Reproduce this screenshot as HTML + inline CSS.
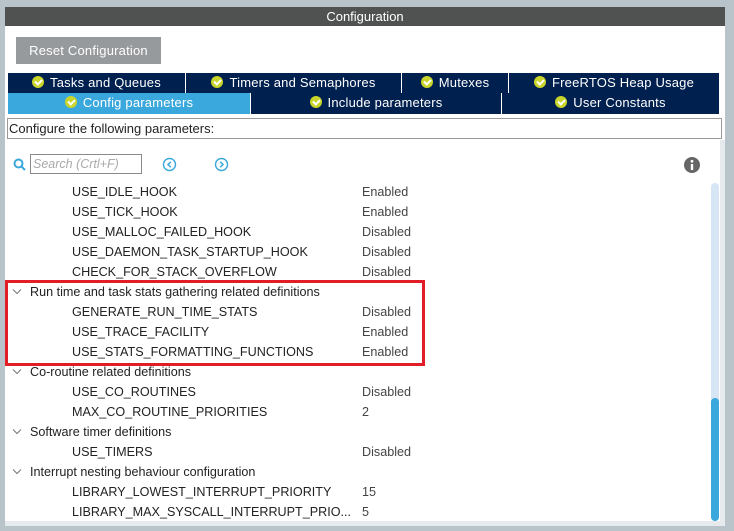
<!DOCTYPE html>
<html><head><style>
*{margin:0;padding:0;box-sizing:border-box}
body{width:734px;height:531px;background:#b9c4ca;font-family:"Liberation Sans",Arial,sans-serif;position:relative;overflow:hidden}
.panel{position:absolute;left:5px;top:7px;width:720px;height:519px;background:#fff}
.hdr{position:absolute;left:5px;top:7px;width:720px;height:19px;background:#505251;color:#fff;font-size:13px;text-align:center;line-height:19px}
.btn{position:absolute;left:16px;top:37px;width:145px;height:27px;background:#979a9d;color:#fff;font-size:13px;line-height:27px;text-align:center;letter-spacing:.2px}
.tab{position:absolute;height:20px;background:#00204f;color:#fff;font-size:13px;line-height:20px;text-align:center;letter-spacing:.2px}
.tab.a{background:#3aa8dc}
.ck{display:inline-block;width:12px;height:12px;border-radius:50%;background:#c9d52b;vertical-align:-1px;margin-right:6px;position:relative}
.ck:after{content:"";position:absolute;left:3px;top:2.5px;width:5px;height:3px;border-left:2px solid #fff;border-bottom:2px solid #fff;transform:rotate(-45deg)}
.desc{position:absolute;left:7px;top:118px;width:715px;height:21px;border:1px solid #9a9a9a;font-size:13px;line-height:19px;padding-left:1px;color:#222}
.srch{position:absolute;left:30px;top:154px;width:112px;height:20px;border:1px solid #8a8a8a;font-size:12.5px;font-style:italic;color:#aaa;line-height:18px;padding-left:2px}
.row{position:absolute;left:0;font-size:12.6px;color:#222;height:20px;line-height:20px;white-space:nowrap}
.n{position:absolute;left:72px}
.v{position:absolute;left:362px;color:#444}
.g{position:absolute;left:30px}
.chev{position:absolute;left:12px;top:6px}
</style></head><body>
<div class="panel"></div>
<div class="hdr">Configuration</div>
<div class="btn">Reset Configuration</div>
<div class="tab" style="left:8px;top:73px;width:177px"><span class="ck"></span>Tasks and Queues</div>
<div class="tab" style="left:186px;top:73px;width:215px"><span class="ck"></span>Timers and Semaphores</div>
<div class="tab" style="left:402px;top:73px;width:106px"><span class="ck"></span>Mutexes</div>
<div class="tab" style="left:509px;top:73px;width:210px"><span class="ck"></span>FreeRTOS Heap Usage</div>
<div class="tab a" style="left:8px;top:93px;width:242px;height:21px"><span class="ck"></span>Config parameters</div>
<div class="tab" style="left:251px;top:93px;width:250px;height:21px"><span class="ck"></span>Include parameters</div>
<div class="tab" style="left:502px;top:93px;width:217px;height:21px"><span class="ck"></span>User Constants</div>
<div class="desc">Configure the following parameters:</div>
<svg style="position:absolute;left:13px;top:158px" width="13" height="13"><circle cx="5.5" cy="5.5" r="4" fill="none" stroke="#3aa8dc" stroke-width="2"/><line x1="8.5" y1="8.5" x2="12" y2="12" stroke="#3aa8dc" stroke-width="2"/></svg>
<div class="srch">Search (Crtl+F)</div>
<svg style="position:absolute;left:162px;top:157px" width="15" height="15"><circle cx="7.5" cy="7.5" r="6" fill="none" stroke="#3aa8dc" stroke-width="1.4"/><path d="M8.8 4.8 L6 7.5 L8.8 10.2" fill="none" stroke="#3aa8dc" stroke-width="1.5"/></svg>
<svg style="position:absolute;left:214px;top:157px" width="15" height="15"><circle cx="7.5" cy="7.5" r="6" fill="none" stroke="#3aa8dc" stroke-width="1.4"/><path d="M6.2 4.8 L9 7.5 L6.2 10.2" fill="none" stroke="#3aa8dc" stroke-width="1.5"/></svg>
<svg style="position:absolute;left:684px;top:157px" width="16" height="16"><circle cx="8" cy="8" r="8" fill="#666"/><rect x="6.8" y="7" width="2.4" height="6" fill="#fff"/><circle cx="8" cy="4.3" r="1.4" fill="#fff"/></svg>
<div class="row" style="top:182px"><span class="n">USE_IDLE_HOOK</span><span class="v">Enabled</span></div>
<div class="row" style="top:202px"><span class="n">USE_TICK_HOOK</span><span class="v">Enabled</span></div>
<div class="row" style="top:222px"><span class="n">USE_MALLOC_FAILED_HOOK</span><span class="v">Disabled</span></div>
<div class="row" style="top:242px"><span class="n">USE_DAEMON_TASK_STARTUP_HOOK</span><span class="v">Disabled</span></div>
<div class="row" style="top:262px"><span class="n">CHECK_FOR_STACK_OVERFLOW</span><span class="v">Disabled</span></div>
<div class="row" style="top:282px;width:400px"><svg class="chev" width="10" height="8"><path d="M1 1.5 L5 5.5 L9 1.5" fill="none" stroke="#777" stroke-width="1"/></svg><span class="g">Run time and task stats gathering related definitions</span></div>
<div class="row" style="top:302px"><span class="n">GENERATE_RUN_TIME_STATS</span><span class="v">Disabled</span></div>
<div class="row" style="top:322px"><span class="n">USE_TRACE_FACILITY</span><span class="v">Enabled</span></div>
<div class="row" style="top:342px"><span class="n">USE_STATS_FORMATTING_FUNCTIONS</span><span class="v">Enabled</span></div>
<div class="row" style="top:362px;width:300px"><svg class="chev" width="10" height="8"><path d="M1 1.5 L5 5.5 L9 1.5" fill="none" stroke="#777" stroke-width="1"/></svg><span class="g">Co-routine related definitions</span></div>
<div class="row" style="top:382px"><span class="n">USE_CO_ROUTINES</span><span class="v">Disabled</span></div>
<div class="row" style="top:402px"><span class="n">MAX_CO_ROUTINE_PRIORITIES</span><span class="v">2</span></div>
<div class="row" style="top:422px;width:300px"><svg class="chev" width="10" height="8"><path d="M1 1.5 L5 5.5 L9 1.5" fill="none" stroke="#777" stroke-width="1"/></svg><span class="g">Software timer definitions</span></div>
<div class="row" style="top:442px"><span class="n">USE_TIMERS</span><span class="v">Disabled</span></div>
<div class="row" style="top:462px;width:300px"><svg class="chev" width="10" height="8"><path d="M1 1.5 L5 5.5 L9 1.5" fill="none" stroke="#777" stroke-width="1"/></svg><span class="g">Interrupt nesting behaviour configuration</span></div>
<div class="row" style="top:482px"><span class="n">LIBRARY_LOWEST_INTERRUPT_PRIORITY</span><span class="v">15</span></div>
<div class="row" style="top:502px"><span class="n">LIBRARY_MAX_SYSCALL_INTERRUPT_PRIO...</span><span class="v">5</span></div>
<div style="position:absolute;left:5px;top:280px;width:420px;height:86px;border:3px solid #e11d27"></div>
<div style="position:absolute;left:720px;top:140px;width:5px;height:386px;background:#e6eaed"></div>
<div style="position:absolute;left:5px;top:521px;width:720px;height:5px;background:#e6eaed"></div>
<div style="position:absolute;left:711px;top:183px;width:8px;height:338px;background:#d6e6f4;border-radius:4px"></div>
<div style="position:absolute;left:711px;top:398px;width:8px;height:123px;background:#3aa8dc;border-radius:4px"></div>
</body></html>
